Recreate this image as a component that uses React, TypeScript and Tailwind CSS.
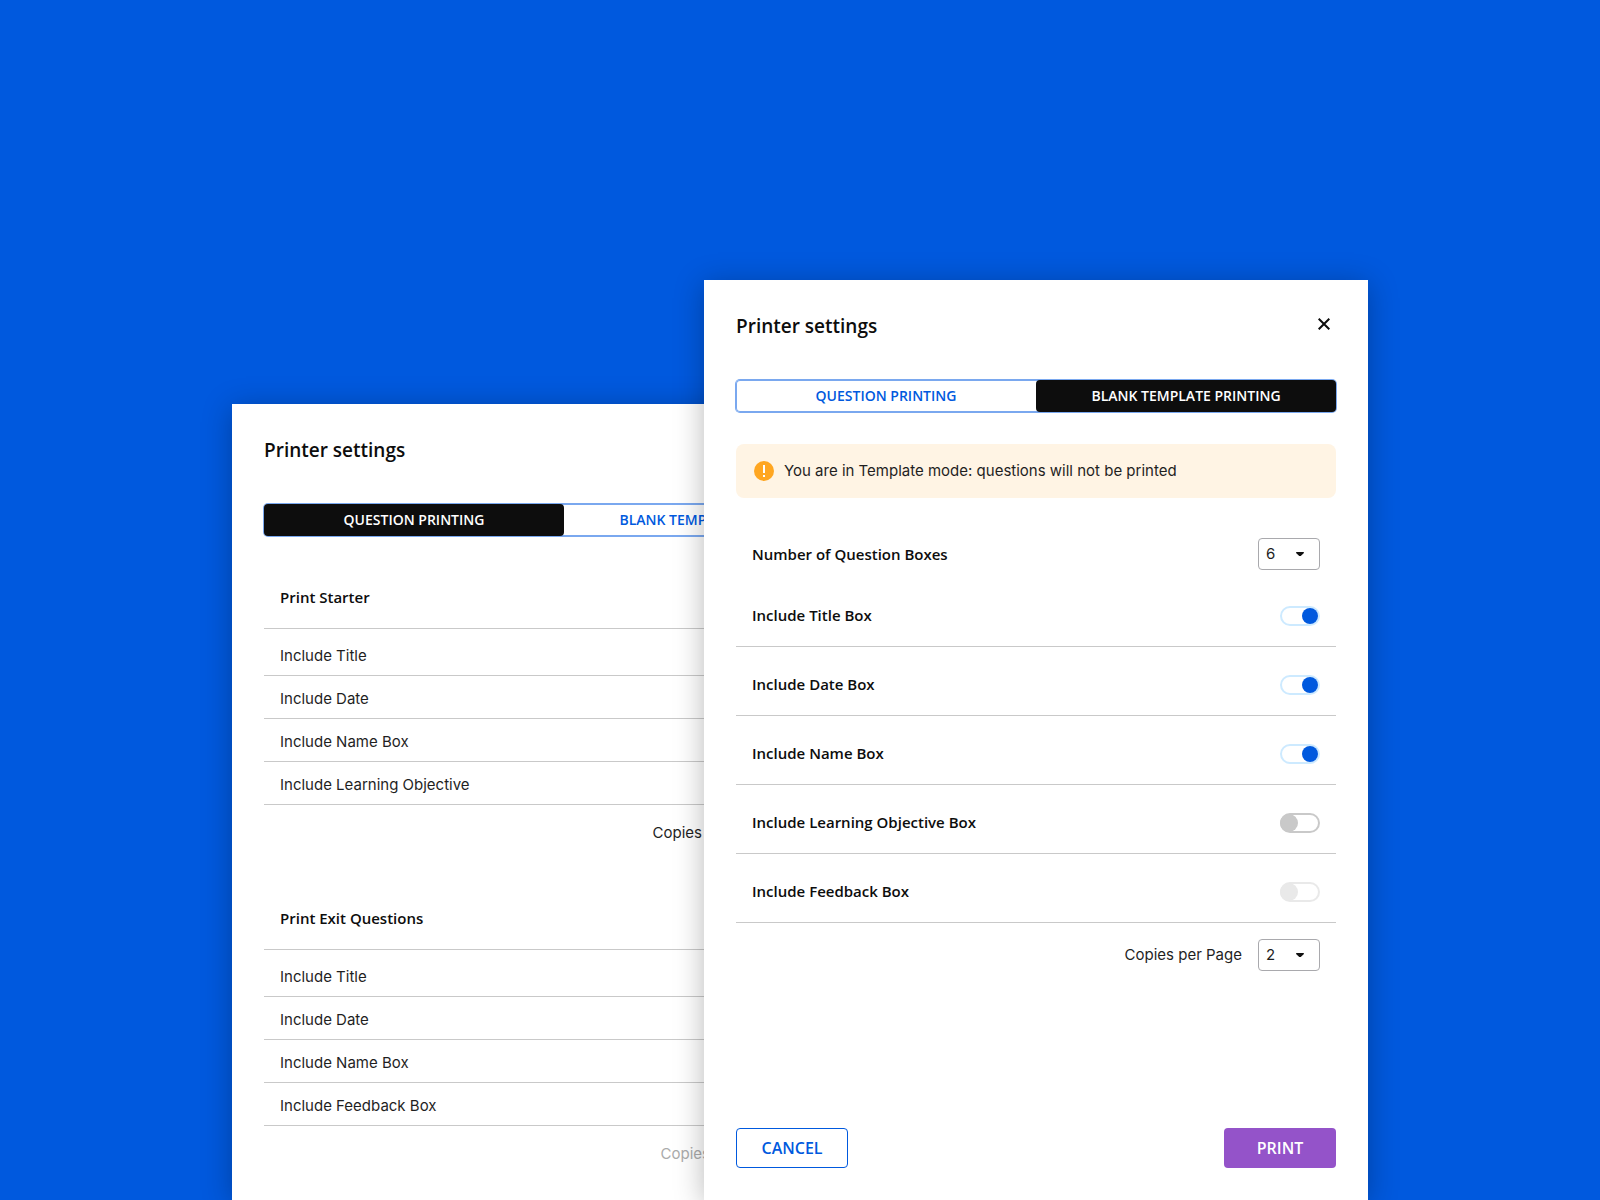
import { useState } from "react";
import type { ReactNode } from "react";

type ToggleTone = "normal" | "disabled";

type ToggleProps = {
  id: string;
  defaultOn?: boolean;
  tone?: ToggleTone;
};

function Toggle({ id, defaultOn = false, tone = "normal" }: ToggleProps) {
  const disabled = tone === "disabled";
  return (
    <span className={`relative h-5 w-10 shrink-0 ${disabled ? "opacity-40" : ""}`}>
      <input
        id={id}
        type="checkbox"
        role="switch"
        defaultChecked={defaultOn}
        disabled={disabled}
        className="
          peer block h-5 w-10 cursor-pointer appearance-none rounded-full
          border-2 border-[#c9c9c9] bg-white
          checked:border-[#cdeaff] disabled:cursor-default
        "
      />
      {/* knob */}
      <span
        className="
          pointer-events-none absolute left-px top-0.5 size-4 rounded-full
          bg-[#c9c9c9] ring-1 ring-[#c9c9c9]
          peer-checked:left-[22px] peer-checked:bg-[#0059de] peer-checked:ring-0
        "
      />
    </span>
  );
}

function NumberSelect({
  id,
  value,
  disabled = false,
}: {
  id: string;
  value: number;
  disabled?: boolean;
}) {
  return (
    <span className="relative shrink-0">
      <select
        id={id}
        defaultValue={value}
        disabled={disabled}
        className="
          block h-8 w-[62px] appearance-none rounded-sm
          border border-[#a9a9ad] bg-white pl-[7px]
          text-[15px] text-[#1f1f1f] disabled:opacity-40
        "
      >
        {[1, 2, 3, 4, 5, 6, 7, 8].map((n) => (
          <option key={n} value={n}>
            {n}
          </option>
        ))}
      </select>
      <svg
        viewBox="0 0 8 4"
        className="pointer-events-none absolute right-4 top-3.5 h-1 w-2"
        aria-hidden="true"
      >
        <path d="M.6 0h6.8c.6 0 .8.8.3 1.2L5 3.7a1.4 1.4 0 0 1-2 0L.3 1.2C-.2.8 0 0 .6 0Z" fill="#111" />
      </svg>
    </span>
  );
}

function Tabs({ active }: { active: "question" | "blank" }) {
  const [tab, setTab] = useState(active);
  const base = "flex-1 cursor-pointer rounded-sm text-sm font-semibold uppercase";
  const on = "bg-[#0d0d0d] text-white";
  const off = "text-[#0059de]";

  return (
    <div className="mt-10 flex h-8 rounded-sm font-['Open_Sans',sans-serif] ring-1 ring-[#7aa8ef] inset-ring-1 inset-ring-[#7aa8ef]">
      <button
        type="button"
        aria-pressed={tab === "question"}
        onClick={() => setTab("question")}
        className={`${base} ${tab === "question" ? on : off}`}
      >
        Question printing
      </button>
      <button
        type="button"
        aria-pressed={tab === "blank"}
        onClick={() => setTab("blank")}
        className={`${base} ${tab === "blank" ? on : off}`}
      >
        Blank template printing
      </button>
    </div>
  );
}

function Panel({ className, children }: { className: string; children: ReactNode }) {
  return (
    <section
      className={`flex w-[664px] shrink-0 flex-col bg-white px-8 pt-8 shadow-[0_4px_28px_rgba(0,0,0,0.28)] ${className}`}
    >
      {children}
    </section>
  );
}

function PanelTitle() {
  return (
    <h2 className="font-['Open_Sans',sans-serif] text-[19px] font-semibold leading-7">Printer settings</h2>
  );
}

function SettingLabel({ id, children }: { id: string; children: ReactNode }) {
  return (
    <label htmlFor={id} className="font-['Open_Sans',sans-serif] text-[15px] font-semibold leading-[18px]">
      {children}
    </label>
  );
}

function SettingRow({
  id,
  label,
  on,
  tone,
}: {
  id: string;
  label: string;
  on?: boolean;
  tone?: ToggleTone;
}) {
  return (
    <div className="flex justify-between border-b border-[#c9c9c9] px-4 pb-5 pt-7">
      <SettingLabel id={id}>{label}</SettingLabel>
      <Toggle id={id} defaultOn={on} tone={tone} />
    </div>
  );
}

function CopiesRow({ id, disabled = false, className }: { id: string; disabled?: boolean; className: string }) {
  return (
    <div className={`flex items-center justify-end px-4 ${disabled ? "gap-2" : "gap-4"} ${className}`}>
      <label htmlFor={id} className={`text-[15px] ${disabled ? "text-[#ababab]" : "text-[#1f1f1f]"}`}>
        Copies per Page
      </label>
      <NumberSelect id={id} value={2} disabled={disabled} />
    </div>
  );
}

function PrintSection({
  id,
  title,
  options,
  disabled = false,
  className,
}: {
  id: string;
  title: string;
  options: string[];
  disabled?: boolean;
  className: string;
}) {
  return (
    <div className={className}>
      <SettingRow id={id} label={title} on={!disabled} />
      <div className="pt-1">
        {options.map((option, i) => (
          <div key={option} className="flex justify-between border-b border-[#c9c9c9] px-4 pb-2 pt-3">
            <label htmlFor={`${id}-${i}`} className="text-[15px] leading-[22px] text-[#1f1f1f]">
              {option}
            </label>
            <Toggle id={`${id}-${i}`} defaultOn={!disabled} />
          </div>
        ))}
      </div>
      <CopiesRow id={`${id}-copies`} disabled={disabled} className="mt-3" />
    </div>
  );
}

const starterOptions = ["Include Title", "Include Date", "Include Name Box", "Include Learning Objective"];
const exitOptions = ["Include Title", "Include Date", "Include Name Box", "Include Feedback Box"];

const templateRows: { label: string; on?: boolean; tone?: ToggleTone }[] = [
  { label: "Include Title Box", on: true },
  { label: "Include Date Box", on: true },
  { label: "Include Name Box", on: true },
  { label: "Include Learning Objective Box" },
  { label: "Include Feedback Box", tone: "disabled" },
];

export default function App() {
  return (
    <main className="flex min-h-screen justify-center overflow-hidden bg-[#0059de] font-['Inter',sans-serif] text-[#0d0d0d]">
      {/* question printing */}
      <Panel className="mt-[404px]">
        <PanelTitle />
        <Tabs active="question" />
        <PrintSection id="starter" title="Print Starter" options={starterOptions} className="mt-6" />
        <PrintSection id="exit" title="Print Exit Questions" options={exitOptions} disabled className="mt-8" />
      </Panel>

      {/* blank template printing */}
      <Panel className="relative -ml-48 mt-[280px] pb-8">
        <div className="flex items-start justify-between">
          <PanelTitle />
          <button type="button" aria-label="Close" className="grid size-6 cursor-pointer place-items-center">
            <svg viewBox="0 0 12 12" className="size-3" fill="none" stroke="#0d0d0d" strokeWidth="2">
              <path d="M.7.7l10.6 10.6M11.3.7L.7 11.3" />
            </svg>
          </button>
        </div>

        <Tabs active="blank" />

        <div className="mt-8 flex h-[54px] items-center gap-2 rounded-lg bg-[#fff4e4] px-4">
          <svg viewBox="0 0 24 24" className="size-6" aria-hidden="true">
            <circle cx="12" cy="12" r="10" fill="#ffa621" />
            <path d="M11 6h2v8h-2zM11 16h2v2h-2z" fill="#fff" />
          </svg>
          <p className="text-[15px] text-[#1f1f1f]">You are in Template mode: questions will not be printed</p>
        </div>

        <div className="mt-10 flex items-center justify-between px-4">
          <SettingLabel id="boxes">Number of Question Boxes</SettingLabel>
          <NumberSelect id="boxes" value={6} />
        </div>

        <div className="mt-2">
          {templateRows.map((row, i) => (
            <SettingRow key={row.label} id={`template-${i}`} {...row} />
          ))}
        </div>

        <CopiesRow id="template-copies" className="mt-4" />

        <div className="mt-auto flex justify-between font-['Open_Sans',sans-serif] font-semibold">
          <button
            type="button"
            className="h-10 w-28 cursor-pointer rounded-sm border border-[#0059de] text-base text-[#0059de]"
          >
            CANCEL
          </button>
          <button type="button" className="h-10 w-28 cursor-pointer rounded-sm bg-[#9453c9] text-base text-white">
            PRINT
          </button>
        </div>
      </Panel>
    </main>
  );
}
